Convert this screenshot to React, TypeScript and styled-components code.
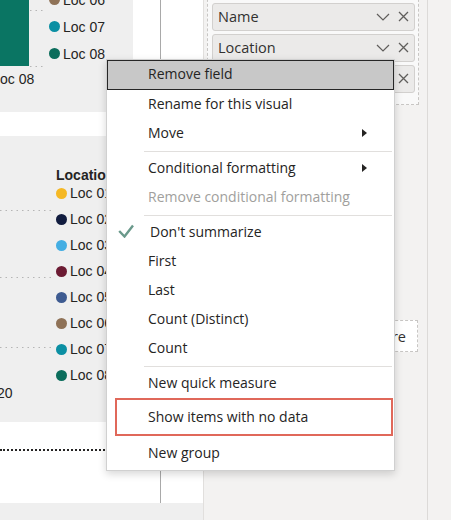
import React from 'react'
import styled, { createGlobalStyle } from 'styled-components'

const GlobalStyle = createGlobalStyle`
  html, body {
    margin: 0;
    padding: 0;
  }
  body {
    width: 451px;
    height: 520px;
    overflow: hidden;
    background: #f3f2f1;
    font-family: "Open Sans", "Noto Sans", sans-serif;
  }
`

const Page = styled.div`
    position: relative;
    display: flex;
    width: 451px;
    height: 520px;
    overflow: hidden;
`

/* ---------- report canvas ---------- */

const Canvas = styled.div`
    width: 203px;
    display: flex;
    flex-direction: column;
    background: #ffffff;
    flex-shrink: 0;
`

const TopVisual = styled.div`
    height: 112px;
    display: flex;
`

const ChartTile = styled.div`
    width: 133px;
    background: #efefef;
    display: flex;
    overflow: hidden;
`

const BlankTile = styled.div`
    flex: 1;
    background: #ffffff;
    display: flex;
`

const ColumnRule = styled.div<{ offset: number }>`
    margin-left: ${p => p.offset}px;
    width: 1px;
    background: #a9a9a9;
`

const PlotColumn = styled.div<{ width: number }>`
    width: ${p => p.width}px;
    flex-shrink: 0;
    display: flex;
    flex-direction: column;
`

const AxisLabel = styled.div<{ indent?: number }>`
    font-family: "Liberation Sans", Arial, sans-serif;
    font-size: 14px;
    line-height: 16px;
    color: #252423;
    margin-left: ${p => p.indent ?? 0}px;
    white-space: nowrap;
`

const Legend = styled.div<{ top: number }>`
    display: flex;
    flex-direction: column;
    margin-top: ${p => p.top}px;
`

const LegendTitle = styled.div`
    font-family: "Liberation Sans", Arial, sans-serif;
    font-size: 14px;
    font-weight: bold;
    line-height: 16px;
    color: #252423;
    margin-bottom: -3px;
    white-space: nowrap;
`

const LegendItem = styled.div<{ step: number }>`
    height: ${p => p.step}px;
    display: flex;
    align-items: center;
    gap: 3px;
    font-family: "Liberation Sans", Arial, sans-serif;
    font-size: 14px;
    color: #252423;
    white-space: nowrap;
`

const Dot = styled.span<{ color: string }>`
    width: 11px;
    height: 11px;
    border-radius: 50%;
    background: ${p => p.color};
    flex-shrink: 0;
`

const WhiteBand = styled.div`
    height: 24px;
    background: #ffffff;
`

const LowerVisual = styled.div`
    height: 286px;
    background: #efefef;
    display: flex;
    overflow: hidden;
`

const BottomVisual = styled.div`
    height: 81px;
    background: #ffffff;
    display: flex;
`

const TrendLine = styled.div`
    width: 160px;
    padding-top: 27px;
    box-sizing: border-box;

    &::before {
        content: "";
        display: block;
        border-top: 2px dotted #252423;
    }
`

const CanvasFloor = styled.div`
    flex: 1;
    background: #efefef;
`

/* ---------- side pane ---------- */

const Pane = styled.div`
    flex: 1;
    display: flex;
    background: #f3f2f1;
    border-left: 1px solid #e1dfdd;
`

const PaneMain = styled.div`
    width: 224px;
    box-sizing: border-box;
    padding: 0 8px 0 3px;
    border-right: 1px solid #dcdad8;
    display: flex;
    flex-direction: column;
`

const PaneSide = styled.div`
    flex: 1;
`

const FieldWell = styled.div`
    margin-top: -6px;
    border: 1px dashed #c8c6c4;
    background: #f9f9f9;
    padding: 8px 3px 11px 4px;
    display: flex;
    flex-direction: column;
    gap: 3px;
`

const Pill = styled.div`
    height: 28px;
    box-sizing: border-box;
    border: 1px solid #d2d0ce;
    border-radius: 3px;
    background: #ebeae9;
    display: flex;
    align-items: center;
    padding: 0 5px 1px 5px;
    font-size: 14.5px;
    color: #323130;
`

const PillName = styled.span`
    flex: 1;
    white-space: nowrap;
`

const PillIcons = styled.span`
    display: flex;
    align-items: center;
    gap: 8px;
`

const DropBox = styled.div`
    margin-top: 215px;
    margin-right: 1px;
    height: 32px;
    box-sizing: border-box;
    border: 1px dashed #c8c6c4;
    background: #ffffff;
    display: flex;
    align-items: center;
    justify-content: flex-end;
    padding-right: 11px;
    font-size: 14.5px;
    color: #323130;
    white-space: nowrap;
    overflow: hidden;
`

/* ---------- context menu ---------- */

const Menu = styled.div`
    position: absolute;
    left: 106px;
    top: 59px;
    width: 289px;
    box-sizing: border-box;
    background: #ffffff;
    border: 1px solid #d0d0d0;
    box-shadow: 0 3px 8px rgba(0, 0, 0, 0.16);
    padding: 0 0 2px 0;
    font-size: 14px;
`

const MenuItem = styled.div<{ active?: boolean; disabled?: boolean }>`
    height: ${p => (p.active ? 30 : 29)}px;
    box-sizing: border-box;
    display: flex;
    align-items: center;
    padding: 0 26px 3px 10px;
    border: 1px solid ${p => (p.active ? '#262626' : 'transparent')};
    background: ${p => (p.active ? '#c8c8c8' : 'transparent')};
    color: ${p => (p.disabled ? '#a19f9d' : '#252423')};
    white-space: nowrap;
`

const CheckSlot = styled.span<{ width: number }>`
    width: ${p => p.width}px;
    flex-shrink: 0;
    display: flex;
    align-items: center;
`

const ItemLabel = styled.span`
    flex: 1;
`

const SubArrow = styled.span`
    width: 0;
    height: 0;
    margin-top: 2px;
    border-left: 5px solid #252423;
    border-top: 4px solid transparent;
    border-bottom: 4px solid transparent;
`

const Separator = styled.div`
    height: 6px;
    display: flex;
    align-items: center;
    padding: 0 2px 0 37px;

    &::after {
        content: "";
        flex: 1;
        height: 1px;
        background: #e1dfdd;
    }
`

const AnnotatedRow = styled.div`
    height: 41px;
    box-sizing: border-box;
    padding: 0 1px 3px 8px;
    display: flex;
`

const Callout = styled.div`
    flex: 1;
    border: 2px solid #e0685a;
    display: flex;
    align-items: center;
    padding: 0 0 2px 31px;
    color: #252423;
    white-space: nowrap;
`

const Chevron = () => (
    <svg width="14" height="8" viewBox="0 0 14 8">
        <polyline points="1,1 7,7 13,1" fill="none" stroke="#605e5c" strokeWidth="1.2" />
    </svg>
)

const Cross = () => (
    <svg width="11" height="11" viewBox="0 0 11 11">
        <path d="M1 1 L10 10 M10 1 L1 10" stroke="#605e5c" strokeWidth="1.3" />
    </svg>
)

const Check = () => (
    <svg width="16" height="14" viewBox="0 0 16 14">
        <polyline points="1.2,7 6.5,12.5 15,1.5" fill="none" stroke="#6a998b" strokeWidth="2.4" />
    </svg>
)

const topLegend = [
    { name: 'Loc 06', color: '#8f7257' },
    { name: 'Loc 07', color: '#0b8fa3' },
    { name: 'Loc 08', color: '#0b6d5c' },
]

const lowerLegend = [
    { name: 'Loc 01', color: '#f5b824' },
    { name: 'Loc 02', color: '#111c3f' },
    { name: 'Loc 03', color: '#44aee3' },
    { name: 'Loc 04', color: '#6c1b33' },
    { name: 'Loc 05', color: '#3e5b91' },
    { name: 'Loc 06', color: '#8f7257' },
    { name: 'Loc 07', color: '#0b8fa3' },
    { name: 'Loc 08', color: '#0b6d5c' },
]

const fields = ['Name', 'Location', 'Value']

const App: React.FunctionComponent = () => {
    return (
        <Page>
            <GlobalStyle />
            <Canvas>
                <TopVisual>
                    <ChartTile>
                        <PlotColumn width={49}>
                            <svg width="46" height="71" viewBox="0 0 46 71">
                                <rect x="0" y="0" width="29" height="66" fill="#0a7563" />
                                <line x1="30" y1="10.5" x2="46" y2="10.5" stroke="#b5b5b5" strokeDasharray="1.5 4" />
                                <line x1="30" y1="66.5" x2="46" y2="66.5" stroke="#b5b5b5" strokeDasharray="1.5 4" />
                            </svg>
                            <AxisLabel>oc 08</AxisLabel>
                        </PlotColumn>
                        <Legend top={-14}>
                            {topLegend.map(l => (
                                <LegendItem key={l.name} step={27}>
                                    <Dot color={l.color} />
                                    {l.name}
                                </LegendItem>
                            ))}
                        </Legend>
                    </ChartTile>
                    <BlankTile>
                        <ColumnRule offset={27} />
                    </BlankTile>
                </TopVisual>
                <WhiteBand />
                <LowerVisual>
                    <PlotColumn width={56}>
                        <svg width="52" height="249" viewBox="0 0 52 249">
                            <line x1="0" y1="74.5" x2="52" y2="74.5" stroke="#b5b5b5" strokeDasharray="1.5 4" />
                            <line x1="0" y1="141.5" x2="52" y2="141.5" stroke="#b5b5b5" strokeDasharray="1.5 4" />
                            <line x1="0" y1="211.5" x2="52" y2="211.5" stroke="#b5b5b5" strokeDasharray="1.5 4" />
                        </svg>
                        <AxisLabel indent={-3}>20</AxisLabel>
                    </PlotColumn>
                    <Legend top={31}>
                        <LegendTitle>Location</LegendTitle>
                        {lowerLegend.map(l => (
                            <LegendItem key={l.name} step={26}>
                                <Dot color={l.color} />
                                {l.name}
                            </LegendItem>
                        ))}
                    </Legend>
                </LowerVisual>
                <BottomVisual>
                    <TrendLine />
                    <ColumnRule offset={0} />
                </BottomVisual>
                <CanvasFloor />
            </Canvas>

            <Pane>
                <PaneMain>
                    <FieldWell>
                        {fields.map(f => (
                            <Pill key={f}>
                                <PillName>{f}</PillName>
                                <PillIcons>
                                    <Chevron />
                                    <Cross />
                                </PillIcons>
                            </Pill>
                        ))}
                    </FieldWell>
                    <DropBox>Add drill-through fields here</DropBox>
                </PaneMain>
                <PaneSide />
            </Pane>

            <Menu>
                <MenuItem active>
                    <CheckSlot width={30} />
                    <ItemLabel>Remove field</ItemLabel>
                </MenuItem>
                <MenuItem>
                    <CheckSlot width={30} />
                    <ItemLabel>Rename for this visual</ItemLabel>
                </MenuItem>
                <MenuItem>
                    <CheckSlot width={30} />
                    <ItemLabel>Move</ItemLabel>
                    <SubArrow />
                </MenuItem>
                <Separator />
                <MenuItem>
                    <CheckSlot width={30} />
                    <ItemLabel>Conditional formatting</ItemLabel>
                    <SubArrow />
                </MenuItem>
                <MenuItem disabled>
                    <CheckSlot width={30} />
                    <ItemLabel>Remove conditional formatting</ItemLabel>
                </MenuItem>
                <Separator />
                <MenuItem>
                    <CheckSlot width={32}>
                        <Check />
                    </CheckSlot>
                    <ItemLabel>Don't summarize</ItemLabel>
                </MenuItem>
                <MenuItem>
                    <CheckSlot width={30} />
                    <ItemLabel>First</ItemLabel>
                </MenuItem>
                <MenuItem>
                    <CheckSlot width={30} />
                    <ItemLabel>Last</ItemLabel>
                </MenuItem>
                <MenuItem>
                    <CheckSlot width={30} />
                    <ItemLabel>Count (Distinct)</ItemLabel>
                </MenuItem>
                <MenuItem>
                    <CheckSlot width={30} />
                    <ItemLabel>Count</ItemLabel>
                </MenuItem>
                <Separator />
                <MenuItem>
                    <CheckSlot width={30} />
                    <ItemLabel>New quick measure</ItemLabel>
                </MenuItem>
                <AnnotatedRow>
                    <Callout>Show items with no data</Callout>
                </AnnotatedRow>
                <MenuItem>
                    <CheckSlot width={30} />
                    <ItemLabel>New group</ItemLabel>
                </MenuItem>
            </Menu>
        </Page>
    )
}

export default App
